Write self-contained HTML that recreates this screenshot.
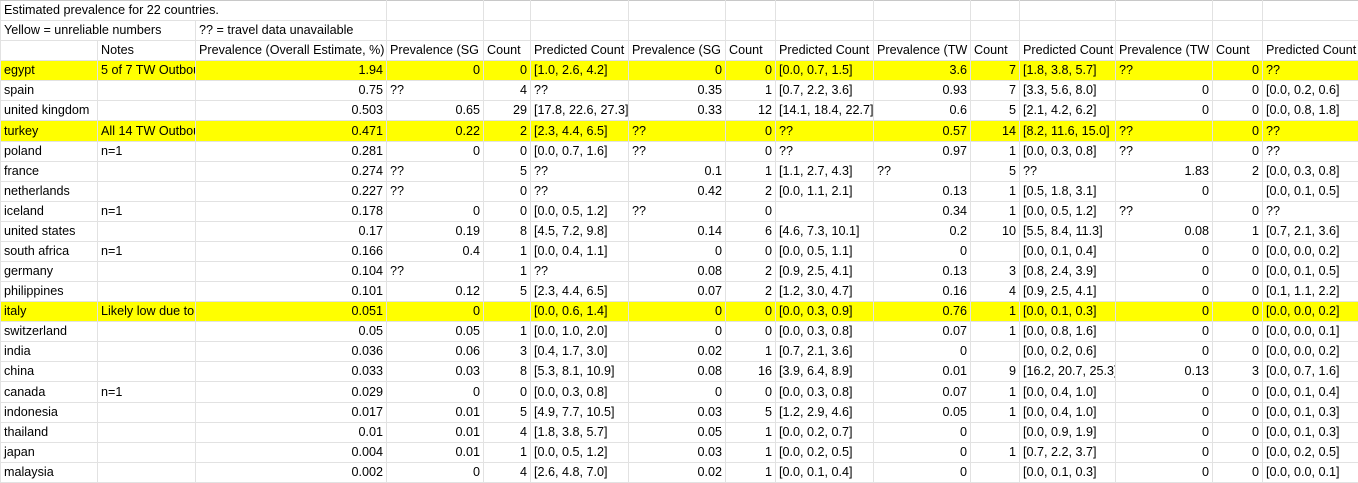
<!DOCTYPE html>
<html><head><meta charset="utf-8"><style>
body{margin:0;background:#fff;width:1358px;height:483px;overflow:hidden}
table{border-collapse:collapse;table-layout:fixed;width:1358px;height:483px;font:12.6px "Liberation Sans",Arial,sans-serif;color:#000}
td{border:1px solid #e2e2e2;padding:0 3px;white-space:nowrap;overflow:hidden;vertical-align:middle;height:19px;line-height:15px}
td.n{text-align:right}
td.v{overflow:visible}
tr.y td{background:#ffff00}
tr:first-child td{border-top:1px solid #c8c8c8}
</style></head><body>
<table>
<colgroup><col style="width:97px"><col style="width:98px"><col style="width:191px"><col style="width:97px"><col style="width:47px"><col style="width:98px"><col style="width:97px"><col style="width:50px"><col style="width:98px"><col style="width:97px"><col style="width:49px"><col style="width:96px"><col style="width:97px"><col style="width:50px"><col style="width:96px"></colgroup>
<tr><td colspan="3">Estimated prevalence for 22 countries.</td><td></td><td></td><td></td><td></td><td></td><td></td><td></td><td></td><td></td><td></td><td></td><td></td></tr>
<tr><td colspan="2">Yellow = unreliable numbers</td><td>?? = travel data unavailable</td><td></td><td></td><td></td><td></td><td></td><td></td><td></td><td></td><td></td><td></td><td></td><td></td></tr>
<tr><td></td><td>Notes</td><td>Prevalence (Overall Estimate, %)</td><td>Prevalence (SG Inbound)</td><td>Count</td><td>Predicted Count</td><td>Prevalence (SG Outbound)</td><td>Count</td><td>Predicted Count</td><td>Prevalence (TW Inbound)</td><td>Count</td><td>Predicted Count</td><td>Prevalence (TW Outbound)</td><td>Count</td><td>Predicted Count</td></tr>
<tr class="y"><td>egypt</td><td>5 of 7 TW Outbound</td><td class="n">1.94</td><td class="n">0</td><td class="n">0</td><td>[1.0, 2.6, 4.2]</td><td class="n">0</td><td class="n">0</td><td>[0.0, 0.7, 1.5]</td><td class="n">3.6</td><td class="n">7</td><td>[1.8, 3.8, 5.7]</td><td>??</td><td class="n">0</td><td>??</td></tr>
<tr><td>spain</td><td></td><td class="n">0.75</td><td>??</td><td class="n">4</td><td>??</td><td class="n">0.35</td><td class="n">1</td><td>[0.7, 2.2, 3.6]</td><td class="n">0.93</td><td class="n">7</td><td>[3.3, 5.6, 8.0]</td><td class="n">0</td><td class="n">0</td><td>[0.0, 0.2, 0.6]</td></tr>
<tr><td>united kingdom</td><td></td><td class="n">0.503</td><td class="n">0.65</td><td class="n">29</td><td>[17.8, 22.6, 27.3]</td><td class="n">0.33</td><td class="n">12</td><td>[14.1, 18.4, 22.7]</td><td class="n">0.6</td><td class="n">5</td><td>[2.1, 4.2, 6.2]</td><td class="n">0</td><td class="n">0</td><td>[0.0, 0.8, 1.8]</td></tr>
<tr class="y"><td>turkey</td><td>All 14 TW Outbound</td><td class="n">0.471</td><td class="n">0.22</td><td class="n">2</td><td>[2.3, 4.4, 6.5]</td><td>??</td><td class="n">0</td><td>??</td><td class="n">0.57</td><td class="n">14</td><td>[8.2, 11.6, 15.0]</td><td>??</td><td class="n">0</td><td>??</td></tr>
<tr><td>poland</td><td>n=1</td><td class="n">0.281</td><td class="n">0</td><td class="n">0</td><td>[0.0, 0.7, 1.6]</td><td>??</td><td class="n">0</td><td>??</td><td class="n">0.97</td><td class="n">1</td><td>[0.0, 0.3, 0.8]</td><td>??</td><td class="n">0</td><td>??</td></tr>
<tr><td>france</td><td></td><td class="n">0.274</td><td>??</td><td class="n">5</td><td>??</td><td class="n">0.1</td><td class="n">1</td><td>[1.1, 2.7, 4.3]</td><td>??</td><td class="n">5</td><td>??</td><td class="n">1.83</td><td class="n">2</td><td>[0.0, 0.3, 0.8]</td></tr>
<tr><td>netherlands</td><td></td><td class="n">0.227</td><td>??</td><td class="n">0</td><td>??</td><td class="n">0.42</td><td class="n">2</td><td>[0.0, 1.1, 2.1]</td><td class="n">0.13</td><td class="n">1</td><td>[0.5, 1.8, 3.1]</td><td class="n">0</td><td></td><td>[0.0, 0.1, 0.5]</td></tr>
<tr><td>iceland</td><td>n=1</td><td class="n">0.178</td><td class="n">0</td><td class="n">0</td><td>[0.0, 0.5, 1.2]</td><td>??</td><td class="n">0</td><td></td><td class="n">0.34</td><td class="n">1</td><td>[0.0, 0.5, 1.2]</td><td>??</td><td class="n">0</td><td>??</td></tr>
<tr><td>united states</td><td></td><td class="n">0.17</td><td class="n">0.19</td><td class="n">8</td><td>[4.5, 7.2, 9.8]</td><td class="n">0.14</td><td class="n">6</td><td>[4.6, 7.3, 10.1]</td><td class="n">0.2</td><td class="n">10</td><td>[5.5, 8.4, 11.3]</td><td class="n">0.08</td><td class="n">1</td><td>[0.7, 2.1, 3.6]</td></tr>
<tr><td>south africa</td><td>n=1</td><td class="n">0.166</td><td class="n">0.4</td><td class="n">1</td><td>[0.0, 0.4, 1.1]</td><td class="n">0</td><td class="n">0</td><td>[0.0, 0.5, 1.1]</td><td class="n">0</td><td></td><td>[0.0, 0.1, 0.4]</td><td class="n">0</td><td class="n">0</td><td>[0.0, 0.0, 0.2]</td></tr>
<tr><td>germany</td><td></td><td class="n">0.104</td><td>??</td><td class="n">1</td><td>??</td><td class="n">0.08</td><td class="n">2</td><td>[0.9, 2.5, 4.1]</td><td class="n">0.13</td><td class="n">3</td><td>[0.8, 2.4, 3.9]</td><td class="n">0</td><td class="n">0</td><td>[0.0, 0.1, 0.5]</td></tr>
<tr><td>philippines</td><td></td><td class="n">0.101</td><td class="n">0.12</td><td class="n">5</td><td>[2.3, 4.4, 6.5]</td><td class="n">0.07</td><td class="n">2</td><td>[1.2, 3.0, 4.7]</td><td class="n">0.16</td><td class="n">4</td><td>[0.9, 2.5, 4.1]</td><td class="n">0</td><td class="n">0</td><td>[0.1, 1.1, 2.2]</td></tr>
<tr class="y"><td>italy</td><td>Likely low due to</td><td class="n">0.051</td><td class="n">0</td><td></td><td>[0.0, 0.6, 1.4]</td><td class="n">0</td><td class="n">0</td><td>[0.0, 0.3, 0.9]</td><td class="n">0.76</td><td class="n">1</td><td>[0.0, 0.1, 0.3]</td><td class="n">0</td><td class="n">0</td><td>[0.0, 0.0, 0.2]</td></tr>
<tr><td>switzerland</td><td></td><td class="n">0.05</td><td class="n">0.05</td><td class="n">1</td><td>[0.0, 1.0, 2.0]</td><td class="n">0</td><td class="n">0</td><td>[0.0, 0.3, 0.8]</td><td class="n">0.07</td><td class="n">1</td><td>[0.0, 0.8, 1.6]</td><td class="n">0</td><td class="n">0</td><td>[0.0, 0.0, 0.1]</td></tr>
<tr><td>india</td><td></td><td class="n">0.036</td><td class="n">0.06</td><td class="n">3</td><td>[0.4, 1.7, 3.0]</td><td class="n">0.02</td><td class="n">1</td><td>[0.7, 2.1, 3.6]</td><td class="n">0</td><td></td><td>[0.0, 0.2, 0.6]</td><td class="n">0</td><td class="n">0</td><td>[0.0, 0.0, 0.2]</td></tr>
<tr><td>china</td><td></td><td class="n">0.033</td><td class="n">0.03</td><td class="n">8</td><td>[5.3, 8.1, 10.9]</td><td class="n">0.08</td><td class="n">16</td><td>[3.9, 6.4, 8.9]</td><td class="n">0.01</td><td class="n">9</td><td>[16.2, 20.7, 25.3]</td><td class="n">0.13</td><td class="n">3</td><td>[0.0, 0.7, 1.6]</td></tr>
<tr><td>canada</td><td>n=1</td><td class="n">0.029</td><td class="n">0</td><td class="n">0</td><td>[0.0, 0.3, 0.8]</td><td class="n">0</td><td class="n">0</td><td>[0.0, 0.3, 0.8]</td><td class="n">0.07</td><td class="n">1</td><td>[0.0, 0.4, 1.0]</td><td class="n">0</td><td class="n">0</td><td>[0.0, 0.1, 0.4]</td></tr>
<tr><td>indonesia</td><td></td><td class="n">0.017</td><td class="n">0.01</td><td class="n">5</td><td>[4.9, 7.7, 10.5]</td><td class="n">0.03</td><td class="n">5</td><td>[1.2, 2.9, 4.6]</td><td class="n">0.05</td><td class="n">1</td><td>[0.0, 0.4, 1.0]</td><td class="n">0</td><td class="n">0</td><td>[0.0, 0.1, 0.3]</td></tr>
<tr><td>thailand</td><td></td><td class="n">0.01</td><td class="n">0.01</td><td class="n">4</td><td>[1.8, 3.8, 5.7]</td><td class="n">0.05</td><td class="n">1</td><td>[0.0, 0.2, 0.7]</td><td class="n">0</td><td></td><td>[0.0, 0.9, 1.9]</td><td class="n">0</td><td class="n">0</td><td>[0.0, 0.1, 0.3]</td></tr>
<tr><td>japan</td><td></td><td class="n">0.004</td><td class="n">0.01</td><td class="n">1</td><td>[0.0, 0.5, 1.2]</td><td class="n">0.03</td><td class="n">1</td><td>[0.0, 0.2, 0.5]</td><td class="n">0</td><td class="n">1</td><td>[0.7, 2.2, 3.7]</td><td class="n">0</td><td class="n">0</td><td>[0.0, 0.2, 0.5]</td></tr>
<tr><td>malaysia</td><td></td><td class="n">0.002</td><td class="n">0</td><td class="n">4</td><td>[2.6, 4.8, 7.0]</td><td class="n">0.02</td><td class="n">1</td><td>[0.0, 0.1, 0.4]</td><td class="n">0</td><td></td><td>[0.0, 0.1, 0.3]</td><td class="n">0</td><td class="n">0</td><td>[0.0, 0.0, 0.1]</td></tr>
</table>
</body></html>
